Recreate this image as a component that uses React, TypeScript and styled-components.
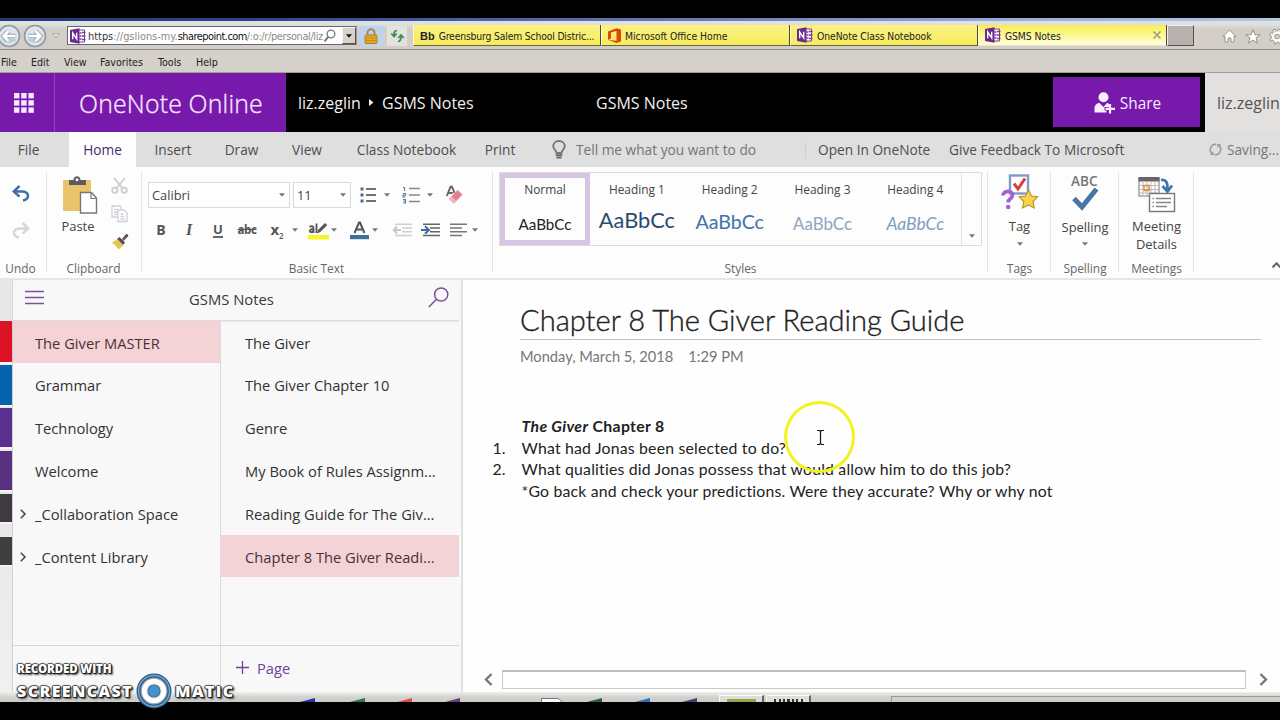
import React from "react";
import styled, { createGlobalStyle, css } from "styled-components";

const ui = `"Open Sans", "Noto Sans", sans-serif`;
const chromeFont = `"DejaVu Sans Condensed", "DejaVu Sans", sans-serif`;
const noteFont = `Lato, "Open Sans", sans-serif`;

const Global = createGlobalStyle`
  * { box-sizing: border-box; }
  html, body { margin: 0; padding: 0; background: #000; overflow: hidden; }
  svg { display: block; flex: none; overflow: visible; }
`;

const Screen = styled.div`
  position: relative;
  width: 1280px;
  height: 720px;
  overflow: hidden;
  display: flex;
  flex-direction: column;
  padding-top: 18px;
  background: #000;
  font-family: ${ui};
  color: #444;
  white-space: nowrap;
`;

/* ---------- browser chrome ---------- */

const TitleEdge = styled.div`
  height: 3px;
  flex: none;
  background: linear-gradient(90deg, #1c3a78, #2b478c 20%, #6a7ab8 55%, #98aede 80%, #a8cbe8);
`;

const AddressRow = styled.div`
  height: 29px;
  flex: none;
  display: flex;
  align-items: center;
  padding-top: 1px;
  background: linear-gradient(#dfe1df 0 3px, #d3cec8 8px);
  border-bottom: 1px solid #8f8b86;
  font-family: ${chromeFont};
  font-size: 10.3px;
  color: #222;
  & > * { flex: none; }
`;

const NavButtons = styled.div`
  width: 67px;
  display: flex;
  align-items: center;
`;

const NavArrows = styled.div`
  display: flex;
  gap: 1px;
  margin: 0 4px 0 -3px;
`;

const AddressBox = styled.div`
  width: 290px;
  height: 19px;
  display: flex;
  align-items: center;
  background: #fff;
  border: 1px solid #6b6570;
  border-right-color: #999;
  padding-left: 2px;
`;

const Url = styled.div`
  width: 240px;
  margin-left: 2px;
  padding-top: 1px;
  color: #8a8a8a;
  font-size: 10.9px;
`;
const UrlScheme = styled.span`
  color: #333;
`;
const UrlHost = styled.span`
  color: #111;
  letter-spacing: -0.5px;
`;
const UrlPath = styled.span`
  letter-spacing: -0.35px;
`;

const DropButton = styled.div`
  width: 14px;
  height: 17px;
  margin-left: 5px;
  display: flex;
  align-items: center;
  justify-content: center;
  background: #d6d2cc;
  border: 1px solid #55504c;
  border-top-color: #f4f4f4;
  border-left-color: #f4f4f4;
`;

const ToolSquare = styled.div<{ $bg: string; $w: number; $ml: number; $mr?: number }>`
  width: ${(p) => p.$w}px;
  height: 20px;
  margin-left: ${(p) => p.$ml}px;
  margin-right: ${(p) => p.$mr ?? 0}px;
  display: flex;
  align-items: center;
  justify-content: center;
  background: ${(p) => p.$bg};
`;

const BrowserTab = styled.div<{ $w: number; $active?: boolean }>`
  width: ${(p) => p.$w}px;
  height: 21px;
  display: flex;
  align-items: center;
  gap: 4px;
  padding-left: 6px;
  background: ${(p) => (p.$active ? "linear-gradient(#f7ee52, #fdf9a0 60%, #fffde0)" : "linear-gradient(#fbf184, #f6ec5c)")};
  border-right: 1.5px solid #4b4640;
  border-bottom: 1px solid ${(p) => (p.$active ? "#e8e4c0" : "#6b6438")};
  border-left: 1px solid #fffbd0;
`;

const TabLabel = styled.span<{ $spacing?: number }>`
  letter-spacing: ${(p) => p.$spacing ?? 0}px;
  padding-top: 1.5px;
  flex: 1;
`;

const Blackboard = styled.b`
  font-family: "Liberation Sans", sans-serif;
  font-size: 11px;
  padding-top: 1px;
`;

const CloseMark = styled.div`
  margin-right: 5px;
`;

const NewTab = styled.div`
  width: 27px;
  height: 21px;
  background: #b6b1af;
  border: 1px solid #55504c;
  border-top-color: #eee;
  border-left-color: #eee;
`;

const BrowserTools = styled.div`
  display: flex;
  gap: 8px;
  margin-left: 28px;
  padding-top: 2px;
`;

const MenuRow = styled.div`
  height: 23px;
  flex: none;
  display: flex;
  align-items: center;
  padding: 1px 0 0 1px;
  background: #d5d0c9;
  border-bottom: 1.5px solid #a39f9a;
  font-family: ${chromeFont};
  font-size: 10.6px;
  color: #222;
`;

const MenuItem = styled.span<{ $w: number }>`
  width: ${(p) => p.$w}px;
`;

/* ---------- OneNote header ---------- */

const Header = styled.div`
  height: 59px;
  flex: none;
  display: flex;
  align-items: stretch;
  background: #e3e0e0;
`;

const Waffle = styled.div`
  width: 55px;
  display: flex;
  align-items: center;
  padding-left: 14px;
  background: #7719aa;
  border-right: 1px solid #9345bd;
`;

const Brand = styled.div`
  width: 231px;
  padding-left: 24px;
  display: flex;
  align-items: center;
  background: #7719aa;
  color: #f8e6ff;
  font-size: 24.8px;
  font-weight: 300;
  letter-spacing: 0.2px;
  -webkit-text-stroke: 0.35px #f8e6ff;
`;

const HeaderBlack = styled.div`
  width: 919px;
  display: flex;
  align-items: center;
  background: #000;
  color: #f0f0f0;
  font-size: 16px;
  padding: 2px 5px 2px 12px;
`;

const CrumbUser = styled.span`
  width: 71px;
`;
const CrumbNotebook = styled.span`
  width: 200px;
  margin: 0 14px 0 8px;
`;

const ShareButton = styled.div`
  width: 147px;
  height: 50px;
  margin: -1px 0 0 auto;
  display: flex;
  align-items: center;
  justify-content: center;
  gap: 5px;
  padding: 2px 0 0 2px;
  background: #7719aa;
  color: #f8eaff;
  font-size: 15.4px;
`;

const HeaderUser = styled.div`
  flex: 1;
  display: flex;
  align-items: center;
  padding: 0 0 0 12px;
  font-size: 16px;
  color: #555;
`;

/* ---------- ribbon tabs ---------- */

const RibbonTabs = styled.div`
  height: 35px;
  flex: none;
  display: flex;
  align-items: stretch;
  background: #dfdfdf;
  font-size: 13.7px;
  color: #4e4e4e;
`;

const RibbonTab = styled.div<{ $w: number; $ml?: number; $active?: boolean }>`
  width: ${(p) => p.$w}px;
  margin-left: ${(p) => p.$ml ?? 0}px;
  display: flex;
  align-items: center;
  justify-content: center;
  ${(p) =>
    p.$active &&
    css`
      background: #fdfdfd;
      color: #4b2a6b;
    `}
`;

const RibbonText = styled.div<{ $w: number; $tone?: string }>`
  width: ${(p) => p.$w}px;
  display: flex;
  align-items: center;
  color: ${(p) => p.$tone ?? "#4e4e4e"};
`;

const BulbSlot = styled.div`
  width: 24px;
  margin-left: 24px;
  display: flex;
  align-items: center;
`;

const ThinRule = styled.div`
  width: 1px;
  height: 16px;
  align-self: center;
  margin-right: 12px;
  background: #cdcdcd;
`;

/* ---------- ribbon ---------- */

const Ribbon = styled.div`
  height: 113px;
  flex: none;
  display: flex;
  background: #fdfdfd;
  border-bottom: 2px solid #e6e6e6;
`;

const Group = styled.div<{ $w: number }>`
  position: relative;
  width: ${(p) => p.$w}px;
  display: flex;
  flex-direction: column;
  flex: none;
  &::after {
    content: "";
    position: absolute;
    right: 0;
    top: 5px;
    height: 100px;
    border-right: 1px solid #e4e4e4;
  }
`;

const GroupBody = styled.div`
  height: 90px;
  display: flex;
`;

const GroupLabel = styled.div<{ $pull?: number }>`
  height: 22px;
  line-height: 24px;
  text-align: center;
  font-size: 11.9px;
  color: #666;
  padding-right: ${(p) => p.$pull ?? 0}px;
`;

const Stack = styled.div<{ $w: number; $pt: number; $gap: number; $ml?: number }>`
  width: ${(p) => p.$w}px;
  margin-left: ${(p) => p.$ml ?? 0}px;
  padding-top: ${(p) => p.$pt}px;
  display: flex;
  flex-direction: column;
  align-items: center;
  gap: ${(p) => p.$gap}px;
`;

const BigLabel = styled.div<{ $pull?: number }>`
  font-size: 12.9px;
  line-height: 18px;
  color: #444;
  text-align: center;
  padding-right: ${(p) => p.$pull ?? 0}px;
`;

const TextTools = styled.div`
  padding: 15px 0 0 5px;
  display: flex;
  flex-direction: column;
  gap: 9px;
`;

const ToolRow = styled.div`
  height: 26px;
  display: flex;
  align-items: center;
  padding-left: 1px;
`;

const FieldBox = styled.div<{ $w: number; $ml?: number }>`
  width: ${(p) => p.$w}px;
  height: 26px;
  margin-left: ${(p) => p.$ml ?? 0}px;
  display: flex;
  align-items: center;
  justify-content: space-between;
  padding: 0 4px 0 3px;
  border: 1px solid #dadada;
  background: #fff;
  font-size: 12.8px;
`;

const Cell = styled.div<{ $w: number; $ml?: number }>`
  width: ${(p) => p.$w}px;
  margin-left: ${(p) => p.$ml ?? 0}px;
  display: flex;
  align-items: center;
  justify-content: center;
  font-size: 14px;
  line-height: 18px;
  font-weight: 700;
  color: #555;
`;

const Italic = styled.i`
  font-family: "Liberation Serif", serif;
  font-size: 16px;
`;
const Under = styled.span`
  border-bottom: 2px solid #666;
  line-height: 13px;
  font-size: 13px;
`;
const Struck = styled.span`
  text-decoration: line-through;
  font-size: 11.5px;
  letter-spacing: -0.4px;
`;
const Subscript = styled.span`
  font-size: 15px;
  sub {
    font-size: 8px;
    line-height: 8px;
    font-weight: 600;
  }
`;

const Gallery = styled.div`
  margin: 5px 0 0 6px;
  width: 483px;
  height: 74px;
  display: flex;
  border: 1px solid #dcdbe0;
`;

const StyleCell = styled.div<{ $active?: boolean }>`
  width: ${(p) => (p.$active ? 90 : 92.8)}px;
  flex: none;
  display: flex;
  flex-direction: column;
  align-items: center;
  justify-content: space-between;
  border: 5px solid ${(p) => (p.$active ? "#d6c6e4" : "transparent")};
  padding-top: 2px;
  padding-left: ${(p) => (p.$active ? 0 : 1)}px;
  font-size: 11.9px;
  line-height: 19px;
`;

const Sample = styled.span<{ $size: number; $tone: string; $italic?: boolean; $lift: number }>`
  font-family: ${noteFont};
  font-size: ${(p) => p.$size}px;
  color: ${(p) => p.$tone};
  font-style: ${(p) => (p.$italic ? "italic" : "normal")};
  line-height: 30px;
  margin-bottom: ${(p) => p.$lift}px;
`;

const GalleryMore = styled.div`
  flex: 1;
  border-left: 1px solid #e1e1e1;
  display: flex;
  align-items: flex-end;
  justify-content: center;
  padding-bottom: 7px;
`;

const Collapse = styled.div`
  margin: auto -1px 10px auto;
  width: 9px;
`;

/* ---------- work area ---------- */

const Work = styled.div`
  height: 412px;
  flex: none;
  display: flex;
  background: #fdfdfd;
`;

const Backdrop = styled.div`
  width: 12px;
  display: flex;
  flex-direction: column;
  background: linear-gradient(#e8e8ea, #e6e6e6 200px, #f0f0ee);
  padding-top: 41px;
`;

const Swatch = styled.div<{ $h: number; $tone: string; $mb: number }>`
  height: ${(p) => p.$h}px;
  margin-bottom: ${(p) => p.$mb}px;
  background: ${(p) => p.$tone};
  box-shadow: 0 2px 0 #f6f4fa;
`;

const Sidebar = styled.div`
  width: 451px;
  display: flex;
  flex-direction: column;
  background: #f8f8f8;
  border-left: 1px solid #cfcfcf;
  border-right: 2px solid #dfe0e2;
`;

const SidebarHead = styled.div`
  height: 41px;
  width: 446px;
  display: flex;
  align-items: center;
  padding: 0 10px 5px 12px;
  border-bottom: 1px solid #dadada;
  box-shadow: 0 1px 2px #e8e8e8;
`;

const NotebookName = styled.div`
  flex: 1;
  text-align: center;
  font-size: 14.8px;
  color: #3a3a3a;
  padding: 2px 9px 0 0;
`;

const Columns = styled.div`
  flex: 1;
  display: flex;
`;

const Column = styled.div<{ $w: number; $rule?: boolean }>`
  width: ${(p) => p.$w}px;
  display: flex;
  flex-direction: column;
  border-right: ${(p) => (p.$rule ? "1px solid #dcdcdc" : "none")};
`;

const Entry = styled.div<{ $active?: boolean }>`
  height: 42.8px;
  display: flex;
  align-items: center;
  padding-top: 0.4px;
  font-size: 14.7px;
  color: ${(p) => (p.$active ? "#4d2f35" : "#333")};
  ${(p) => p.$active && css`background: linear-gradient(#f4d3d6, #f4d3d6) 0 0 / 100% 42px no-repeat;`}
`;

const EntryLead = styled.div<{ $w: number }>`
  width: ${(p) => p.$w}px;
  flex: none;
  display: flex;
  justify-content: center;
  padding-right: 2px;
`;

const ColumnFoot = styled.div`
  margin-top: auto;
  height: 47px;
  border-top: 1px solid #d5d5d5;
  display: flex;
  align-items: center;
  gap: 8px;
  padding: 0 0 3px 15px;
  font-size: 14.7px;
  color: #7140a3;
`;

/* ---------- note page ---------- */

const Page = styled.div`
  flex: 1;
  display: flex;
  flex-direction: column;
  background: #fefefe;
`;

const PageTitle = styled.div`
  width: 741px;
  margin: 20px 0 0 57px;
  height: 40px;
  line-height: 39px;
  border-bottom: 1px solid #c0c0c0;
  font-family: ${noteFont};
  font-weight: 300;
  font-size: 29.1px;
  color: #222;
  -webkit-text-stroke: 0.35px #222;
`;

const PageDate = styled.div`
  display: flex;
  gap: 15px;
  margin: 7px 0 0 57px;
  line-height: 19px;
  font-family: ${noteFont};
  font-size: 14.65px;
  color: #767676;
`;

const NoteBody = styled.div`
  margin: 49px 0 0 29.5px;
  font-family: ${noteFont};
  font-size: 15.8px;
  letter-spacing: 0.2px;
  font-variant-ligatures: none;
  line-height: 21.6px;
  color: #222;
`;

const NoteLine = styled.div<{ $bold?: boolean }>`
  display: flex;
  font-weight: ${(p) => (p.$bold ? 700 : 400)};
  letter-spacing: ${(p) => (p.$bold ? 0.34 : 0.2)}px;
  white-space: pre;
`;

const NoteNumber = styled.span`
  width: 29px;
`;

const ScrollRow = styled.div`
  margin-top: auto;
  padding: 0 12px 3px 21px;
  height: 22px;
  display: flex;
  align-items: center;
`;

const ScrollThumb = styled.div`
  width: 744px;
  height: 19px;
  margin: 0 auto 0 9px;
  border: 1px solid #c9c9c9;
  border-top: 2px solid #bdbdbd;
  background: #fff;
`;

/* ---------- taskbar ---------- */

const Taskbar = styled.div`
  height: 10px;
  flex: none;
  display: flex;
  align-items: flex-end;
  overflow: hidden;
  background: linear-gradient(#f0f0ea, #d2d3cf 5px, #cbccc9);
`;

const Corner = styled.div<{ $ml: number; $tone: string }>`
  width: 15px;
  height: 4px;
  margin-left: ${(p) => p.$ml}px;
  flex: none;
  background: ${(p) => p.$tone};
  clip-path: polygon(100% 0, 100% 100%, 0 100%);
`;

const PaperTop = styled.div`
  margin-left: 81px;
`;

const TaskButton = styled.div<{ $w: number; $ml: number }>`
  width: ${(p) => p.$w}px;
  height: 7px;
  margin-left: ${(p) => p.$ml}px;
  padding: 3px 6px 0 7px;
  background: #deded8;
  border-top: 1px solid #fafafa;
  border-left: 1px solid #fafafa;
  border-right: 2px solid #666;
`;

const TaskFill = styled.div<{ $kind: "olive" | "dots" }>`
  height: 4px;
  background: ${(p) => (p.$kind === "olive" ? "#98a44c" : "repeating-linear-gradient(90deg, #333 0 2px, #deded8 2px 4.5px)")};
`;

const Tray = styled.div`
  margin-left: auto;
  width: 389px;
  height: 6px;
  border-top: 1px solid #999;
  border-left: 1px solid #999;
`;

/* ---------- overlays ---------- */

const Watermark = styled.div`
  position: absolute;
  left: 17px;
  top: 661px;
  color: #fff;
  font-family: "Open Sans", sans-serif;
  font-weight: 800;
  text-shadow: 1px 0 1px #222, -1px 0 1px #333, 0 1px 1px #222, 0 -1px 1px #555, 1px 1px 1px #111, 2px 2px 2px #555;
`;

const WatermarkTop = styled.div`
  font-size: 11.5px;
  line-height: 16px;
  letter-spacing: -0.15px;
`;

const WatermarkRow = styled.div`
  display: flex;
  align-items: center;
  height: 34px;
  margin-top: -3px;
  font-size: 16px;
  letter-spacing: 1.4px;
`;

const DialSlot = styled.div`
  margin: 0 3px 0 3px;
`;

const PointerHalo = styled.div`
  position: absolute;
  left: 784px;
  top: 401px;
  width: 71px;
  height: 72px;
  padding-left: 1px;
  border: 3.5px solid #f3f31f;
  border-radius: 50%;
  display: flex;
  align-items: center;
  justify-content: center;
`;

/* ---------- drawings ---------- */

const Caret = ({ tone = "#777" }: { tone?: string }) => (
  <svg width="6" height="4" viewBox="0 0 6 4"><path d="M0 .3h6L3 3.8z" fill={tone} /></svg>
);

const Round = ({ flip }: { flip?: boolean }) => (
  <svg width="25" height="24" viewBox="0 0 25 24">
    <circle cx="12" cy="12" r="10.5" fill="#dfe5ea" stroke="#8d98a3" strokeWidth="1.6" />
    <path d="M4 15a9 7 0 0 0 16 0z" fill="#b9cfd4" />
    <path d={flip ? "M5.500 12h12M12.500 7l5 5-5 5" : "M18.500 12h-12M11.500 7l-5 5 5 5"} fill="none" stroke="#98a2ac" strokeWidth="4.4" />
    <path d={flip ? "M5.500 12h12M12.500 7l5 5-5 5" : "M18.500 12h-12M11.500 7l-5 5 5 5"} fill="none" stroke="#fff" strokeWidth="2.6" />
  </svg>
);

const HistoryCaret = () => (
  <svg width="8" height="6" viewBox="0 0 8 6"><path d="M.5.500h7L4 5z" fill="#e4e4e4" stroke="#aaa" /></svg>
);

const OneNoteMark = () => (
  <svg width="16" height="16" viewBox="0 0 16 16">
    <path d="M8 2h6.500v12H8z" fill="#fff" stroke="#7b3a9c" />
    <path d="M12 4.500h3.500M12 8h3.500M12 11.500h3.500M9.500 5h2M9.500 8h2M9.500 11h2" stroke="#7b3a9c" strokeWidth="1.300" />
    <path d="M0 2l9.500-1.800v15.600L0 14z" fill="#6b2a8f" />
    <path d="M2.700 11.200V5l4 6V4.800" fill="none" stroke="#fff" strokeWidth="1.400" />
  </svg>
);

const OfficeMark = () => (
  <svg width="13" height="15" viewBox="0 0 13 15">
    <path d="M0 3.500L8.500.2 13 1.500v12L8.500 15 0 11.800l8.500 1V3L3 4.500v6L0 11.800z" fill="#d9480f" />
  </svg>
);

const Lens = () => (
  <svg width="14" height="14" viewBox="0 0 14 14">
    <circle cx="8" cy="5" r="3.800" fill="none" stroke="#777" strokeWidth="1.300" />
    <path d="M5.200 7.800L1.500 12.300" stroke="#777" strokeWidth="2" />
  </svg>
);

const Padlock = () => (
  <svg width="14" height="16" viewBox="0 0 14 16">
    <path d="M3.500 8V4.500a3.500 3.300 0 0 1 7 0V8" fill="none" stroke="#a58a4a" strokeWidth="2" />
    <rect x="1" y="7" width="12" height="8.500" rx="1" fill="#e2a528" stroke="#b87f18" />
    <path d="M1.500 10h11M1.500 12.500h11" stroke="#c98d1b" />
  </svg>
);

const Refresh = () => (
  <svg width="15" height="14" viewBox="0 0 15 14">
    <path d="M7 1.500C4.500 1.500 4 3 4 6M1.200 4.500L4 7.500l2.800-3" fill="none" stroke="#3c8a4e" strokeWidth="1.700" />
    <path d="M8 12.500c2.500 0 3-1.500 3-5M8.200 9L11 6l2.800 3" fill="none" stroke="#3c8a4e" strokeWidth="1.700" />
  </svg>
);

const CloseGlyph = () => (
  <svg width="8" height="8" viewBox="0 0 8 8"><path d="M.5.500l7 7M7.500.500l-7 7" stroke="#a9a070" strokeWidth="1.700" /></svg>
);

const HomeGlyph = () => (
  <svg width="15" height="14" viewBox="0 0 15 14">
    <path d="M1 7.500L7.500 1 14 7.500h-2V13H9V9H6v4H3V7.500z" fill="#fff" stroke="#95918c" />
  </svg>
);
const StarGlyph = () => (
  <svg width="16" height="15" viewBox="0 0 16 15">
    <path d="M8 .8l2 5h5.200l-4.200 3.200 1.600 5.200L8 11.200l-4.600 3L5 9 .8 5.800H6z" fill="#fff" stroke="#95918c" />
  </svg>
);
const GearGlyph = () => (
  <svg width="16" height="15" viewBox="0 0 16 15">
    <circle cx="8" cy="7.500" r="6" fill="none" stroke="#95918c" strokeWidth="3.600" strokeDasharray="2.700 2.010" />
    <circle cx="8" cy="7.500" r="4" fill="none" stroke="#95918c" strokeWidth="4" />
    <circle cx="8" cy="7.500" r="6" fill="none" stroke="#fff" strokeWidth="1.800" strokeDasharray="1.700 3.010" strokeDashoffset="-.5" />
    <circle cx="8" cy="7.500" r="4" fill="none" stroke="#fff" strokeWidth="2.400" />
  </svg>
);

const WaffleGlyph = () => (
  <svg width="20" height="20" viewBox="0 0 20 20" fill="#fbe9ff">
    {[0, 7.2, 14.4].map((y) => [0, 7.2, 14.4].map((x) => <rect key={`${x}-${y}`} x={x} y={y} width="5.400" height="5.400" />))}
  </svg>
);

const CrumbArrow = () => (
  <svg width="5" height="7" viewBox="0 0 5 7"><path d="M0 0l4.500 3.500L0 7z" fill="#eee" /></svg>
);

const ShareGlyph = () => (
  <svg width="21" height="22" viewBox="0 0 21 22">
    <circle cx="9.500" cy="5.200" r="5" fill="#fbefff" />
    <path d="M.5 20.500v-4c0-3 2-5.500 5-5.500l4 4 3.500-4c1 0 1.500.5 2 1v3h-4.500v3.500h2v2z" fill="#fbefff" />
    <path d="M16 12v9.500M11.500 16.800h9.500" stroke="#fbefff" strokeWidth="2.200" />
  </svg>
);

const Bulb = () => (
  <svg width="14" height="19" viewBox="0 0 14 19">
    <path d="M4.500 13c0-3-3.300-3.500-3.300-7A5.700 5.300 0 0 1 7 1a5.700 5.300 0 0 1 5.800 5c0 3.500-3.300 4-3.300 7z" fill="none" stroke="#777" strokeWidth="1.900" />
    <path d="M3.800 15.200h6.400M4.500 17.600h5" stroke="#666" strokeWidth="1.900" />
  </svg>
);

const Spinner = () => (
  <svg width="13" height="13" viewBox="0 0 13 13" fill="none" stroke="#999" strokeWidth="1.500">
    <path d="M3.800 11A5.300 5.300 0 0 1 7.500 1.300M9.200 2A5.300 5.300 0 0 1 5.500 11.700" />
    <path d="M9 4.200V1.700h2.500M4 8.800v2.500H1.500" strokeWidth="1.200" />
  </svg>
);

const Undo = ({ tone, flip }: { tone: string; flip?: boolean }) => (
  <svg width="18" height="17" viewBox="0 0 18 17">
    <g transform={flip ? "translate(18 0) scale(-1 1)" : undefined} fill="none" stroke={tone} strokeWidth="2.500">
      <path d="M2 6.500h8.500c4 0 6 2.500 5.500 5-.4 2-2 3.500-5 4" />
      <path d="M7.500.8L1.800 6.500l5.700 5.200" />
    </g>
  </svg>
);

const PasteGlyph = () => (
  <svg width="36" height="38" viewBox="0 0 36 38">
    <rect x="1" y="4" width="28" height="31" rx="1" fill="#ebc36c" />
    <path d="M7 4h4.500c0-5 7-5 7 0H24v5H7z" fill="#5c5c60" />
    <circle cx="15" cy="3.800" r="1.500" fill="#fff" />
    <path d="M18.500 16.500h11l5 5.500v15h-16z" fill="#fff" stroke="#777" strokeWidth="1.400" />
    <path d="M29 17v5.500h5.500" fill="none" stroke="#777" strokeWidth="1.200" />
  </svg>
);

const Scissors = () => (
  <svg width="17" height="17" viewBox="0 0 17 17" fill="none" stroke="#cbcdd1" strokeWidth="1.800">
    <path d="M3 1l8.500 10M14 1L5.500 11" />
    <circle cx="3.800" cy="13.200" r="2.600" />
    <circle cx="13.200" cy="13.200" r="2.600" />
  </svg>
);
const CopyGlyph = () => (
  <svg width="17" height="17" viewBox="0 0 17 17" fill="#fff" stroke="#cfd1d6" strokeWidth="1.300">
    <path d="M1 1h8l1 1.500V12H1zM3 4.500h4M3 7h4M3 9.500h3" />
    <path d="M7 5h6l3 3v8.500H7zM9.500 9h3M9.500 11.500h4M9.500 14h4" />
  </svg>
);
const Brush = () => (
  <svg width="18" height="17" viewBox="0 0 18 17">
    <path d="M1 9.500l5-3 6 6-4.500 4C6 13.500 3.500 12 1 9.500z" fill="#e6c64a" />
    <path d="M6 6l2.500-2 5.500 5.500-2 2.500z" fill="#57504f" />
    <path d="M11 6l3.500-4.500c1.500-1.500 3.500 0 2.500 2L12.500 8z" fill="#6b5550" />
  </svg>
);

const Bullets = () => (
  <svg width="16" height="16" viewBox="0 0 16 16">
    <path d="M6 2h10M6 8h10M6 14h10" stroke="#444" strokeWidth="1.700" />
    {[2, 8, 14].map((y) => <rect key={y} x=".5" y={y - 1.5} width="3" height="3" fill="#4d6a8e" />)}
  </svg>
);
const Numbers = () => (
  <svg width="18" height="18" viewBox="0 0 18 18">
    <path d="M7 2.500h11M7 9h11M7 15.500h11" stroke="#888" strokeWidth="1.400" />
    <path d="M1 1.500h1.500V5M1 7.500h2.500v1.700H1v1.800h2.500M1 13.500h2.500V17H1M1.500 15.200h2" fill="none" stroke="#6b7fa6" strokeWidth="1.200" />
  </svg>
);
const Eraser = () => (
  <svg width="17" height="18" viewBox="0 0 17 18">
    <path d="M.8 10L4.500.800h1.500l2.500 6M2.300 7h4.500" fill="none" stroke="#666" strokeWidth="1.900" />
    <path d="M3 13L11.500 4l5 4.500L8 17.500z" fill="#e57f92" />
    <path d="M3 13l2.500-2.700L10.500 14.900 8 17.500z" fill="#f3b4bd" />
  </svg>
);
const Highlighter = () => (
  <svg width="21" height="19" viewBox="0 0 21 19">
    <path d="M1.500 6c2-1.500 4-1 4 1v5M5.500 8c-4-.3-4.500 3-2.500 3.200 1 0 2-.6 2.500-1.500M8.500 2.500V12" fill="none" stroke="#555" strokeWidth="1.800" />
    <path d="M9 12.500l1-3.500 7-7 2.300 2-7 7z" fill="#555" />
    <rect y="14" width="21" height="4.500" fill="#f5f52a" />
  </svg>
);
const FontColor = () => (
  <svg width="19" height="19" viewBox="0 0 19 19">
    <path d="M4.500 12L9 1.500h1L14.500 12M6.200 8.500h6.600" fill="none" stroke="#555" strokeWidth="2" />
    <rect y="14" width="19" height="4.200" fill="#3f6d9c" />
  </svg>
);
const Indent = ({ dim }: { dim?: boolean }) => (
  <svg width="19" height="14" viewBox="0 0 19 14">
    <path d="M2 1.200h17M9 5h10M9 8.700h10M2 12.500h17" stroke={dim ? "#cfcfcf" : "#666"} strokeWidth="1.400" />
    <path d={dim ? "M8 7H1M4 3.500L.8 7 4 10.500" : "M0 7h7M4 3.200L8 7l-4 3.800"} fill="none" stroke={dim ? "#c6c6c6" : "#3a6ea5"} strokeWidth="2" />
  </svg>
);
const AlignLeft = () => (
  <svg width="17" height="14" viewBox="0 0 17 14">
    <path d="M0 1.200h17M0 5h12M0 8.700h17M0 12.500h12" stroke="#777" strokeWidth="1.400" />
  </svg>
);

const TagGlyph = () => (
  <svg width="37" height="36" viewBox="0 0 37 36">
    <rect x="9" y="1.500" width="18" height="18" fill="#fff" stroke="#7f9cc8" strokeWidth="2.400" />
    <path d="M13 9.500l4 5.500 7-10.500" fill="none" stroke="#d8412f" strokeWidth="3" />
    <path d="M2 21.500c.3-5.500 9.500-5.500 9.500-.5 0 3.800-4.300 3-4.300 7.500" fill="none" stroke="#a65fd6" strokeWidth="3.800" />
    <circle cx="7.200" cy="33" r="2.300" fill="#a65fd6" />
    <path d="M27.500 16l3 6 6 .8-4.500 4.700 1.200 6.500-5.700-3-6 3 1.300-6.500-4.600-4.700 6.300-.8z" fill="#f6d54f" stroke="#bd9430" strokeWidth="1.200" />
  </svg>
);

const Abc = styled.div`
  font-size: 13.6px;
  line-height: 13px;
  color: #777;
  font-weight: 600;
`;
const Check = () => (
  <svg width="28" height="24" viewBox="0 0 28 24"><path d="M3 11.500l8 8.500L25.500 2" fill="none" stroke="#4675a8" strokeWidth="5" /></svg>
);

const MeetingGlyph = () => (
  <svg width="37" height="36" viewBox="0 0 37 36">
    <rect x="1" y="2" width="20" height="18" fill="#fff" stroke="#777" />
    <rect x=".5" y="1" width="21" height="4.500" fill="#666" />
    <path d="M5 6v13M9 6v13M13 6v13M17 6v13M2 9.500h18M2 13.500h18M2 17h18" stroke="#bbb" />
    <rect x="6" y="9.500" width="5" height="5" fill="none" stroke="#e09138" strokeWidth="1.500" />
    <rect x="11.500" y="17.500" width="25" height="18" fill="#fff" stroke="#777" strokeWidth="1.400" />
    <path d="M18 22.500h15M18 26.500h15M18 30.500h11M14.500 22.500h1.500M14.500 26.500h1.500M14.500 30.500h1.500" stroke="#888" strokeWidth="1.300" />
    <path d="M23 4c5-1 7 3 6.500 9M24.500 10l5 5.500 4.500-6" fill="none" stroke="#3d76ad" strokeWidth="2.800" />
  </svg>
);

const Burger = () => (
  <svg width="19" height="15" viewBox="0 0 19 15"><path d="M0 1.500h19M0 7.500h19M0 13.500h19" stroke="#7a5299" strokeWidth="1.400" /></svg>
);
const SearchGlyph = () => (
  <svg width="21" height="21" viewBox="0 0 21 21" fill="none" stroke="#7a4f9c" strokeWidth="1.500">
    <circle cx="13.200" cy="7.500" r="6.600" /><path d="M8.500 12.300L.8 20" />
  </svg>
);
const Chevron = ({ w, h, d, tone, weight }: { w: number; h: number; d: string; tone: string; weight: number }) => (
  <svg width={w} height={h} viewBox={`0 0 ${w} ${h}`}><path d={d} fill="none" stroke={tone} strokeWidth={weight} /></svg>
);
const Plus = () => (
  <svg width="13" height="13" viewBox="0 0 13 13"><path d="M6.500 0v13M0 6.500h13" stroke="#7140a3" strokeWidth="1.300" /></svg>
);

const RecorderDial = () => (
  <svg width="36" height="36" viewBox="0 0 36 36">
    <circle cx="18" cy="18" r="15.500" fill="#8fa3b3" stroke="#2f5a80" strokeWidth="4" />
    <circle cx="18" cy="18" r="15.500" fill="none" stroke="#6fa6cf" strokeWidth="1.500" />
    <circle cx="18" cy="18" r="10" fill="#dfe6ea" stroke="#fff" strokeWidth="4.500" />
    <circle cx="18" cy="18" r="6" fill="#3f94d1" stroke="#50708a" strokeWidth="1.200" />
  </svg>
);

const PaperEdge = () => (
  <svg width="22" height="4" viewBox="0 0 22 4"><path d="M.5 5V.500h17L22 5" fill="#fafafa" stroke="#777" /></svg>
);

const IBeam = () => (
  <svg width="7" height="15" viewBox="0 0 7 15"><path d="M0 .5h2.500l1 1 1-1H7M3.500 1v13M0 14.500h2.500l1-1 1 1H7" fill="none" stroke="#111" strokeWidth="1.200" /></svg>
);

/* ---------- data ---------- */

const sections = [
  { name: "The Giver MASTER", active: true },
  { name: "Grammar" },
  { name: "Technology" },
  { name: "Welcome" },
  { name: "_Collaboration Space", group: true },
  { name: "_Content Library", group: true },
];
const pages = [
  { name: "The Giver" },
  { name: "The Giver Chapter 10" },
  { name: "Genre" },
  { name: "My Book of Rules Assignm..." },
  { name: "Reading Guide for The Giv..." },
  { name: "Chapter 8 The Giver Readi...", active: true },
];
const styleSamples = [
  { name: "Normal", size: 15.2, tone: "#222", lift: 1.5, active: true },
  { name: "Heading 1", size: 21.8, tone: "#2b4a70", lift: 5 },
  { name: "Heading 2", size: 19.6, tone: "#4172a8", lift: 3.5 },
  { name: "Heading 3", size: 16.9, tone: "#8aa5c0", lift: 1 },
  { name: "Heading 4", size: 17.5, tone: "#7d9dc0", lift: 1, italic: true },
];

export default function App() {
  return (
    <Screen>
      <Global />
      <TitleEdge />
      <AddressRow>
        <NavButtons>
          <NavArrows><Round /><Round flip /></NavArrows>
          <HistoryCaret />
        </NavButtons>
        <AddressBox>
          <OneNoteMark />
          <Url><UrlScheme>https</UrlScheme>://gslions-my.<UrlHost>sharepoint.com</UrlHost><UrlPath>/:o:/r/personal/liz</UrlPath></Url>
          <Lens />
          <DropButton><Caret tone="#111" /></DropButton>
        </AddressBox>
        <ToolSquare $bg="#bdd4ee" $w={24} $ml={2}><Padlock /></ToolSquare>
        <ToolSquare $bg="#e2e3df" $w={20} $ml={4} $mr={6}><Refresh /></ToolSquare>
        <BrowserTab $w={188}><Blackboard>Bb</Blackboard><TabLabel $spacing={-0.16}>Greensburg Salem School Distric...</TabLabel></BrowserTab>
        <BrowserTab $w={189}><OfficeMark /><TabLabel>Microsoft Office Home</TabLabel></BrowserTab>
        <BrowserTab $w={188}><OneNoteMark /><TabLabel $spacing={-0.05}>OneNote Class Notebook</TabLabel></BrowserTab>
        <BrowserTab $w={189} $active>
          <OneNoteMark /><TabLabel $spacing={-0.1}>GSMS Notes</TabLabel>
          <CloseMark><CloseGlyph /></CloseMark>
        </BrowserTab>
        <NewTab />
        <BrowserTools><HomeGlyph /><StarGlyph /><GearGlyph /></BrowserTools>
      </AddressRow>
      <MenuRow>
        <MenuItem $w={30}>File</MenuItem>
        <MenuItem $w={33}>Edit</MenuItem>
        <MenuItem $w={36}>View</MenuItem>
        <MenuItem $w={58}>Favorites</MenuItem>
        <MenuItem $w={38}>Tools</MenuItem>
        <MenuItem $w={40}>Help</MenuItem>
      </MenuRow>

      <Header>
        <Waffle><WaffleGlyph /></Waffle>
        <Brand>OneNote Online</Brand>
        <HeaderBlack>
          <CrumbUser>liz.zeglin</CrumbUser>
          <CrumbArrow />
          <CrumbNotebook>GSMS Notes</CrumbNotebook>
          <span>GSMS Notes</span>
          <ShareButton><ShareGlyph />Share</ShareButton>
        </HeaderBlack>
        <HeaderUser>liz.zeglin</HeaderUser>
      </Header>

      <RibbonTabs>
        <RibbonTab $w={57}>File</RibbonTab>
        <RibbonTab $w={67} $ml={12} $active>Home</RibbonTab>
        <RibbonTab $w={74}>Insert</RibbonTab>
        <RibbonTab $w={63}>Draw</RibbonTab>
        <RibbonTab $w={68}>View</RibbonTab>
        <RibbonTab $w={131}>Class Notebook</RibbonTab>
        <RibbonTab $w={56}>Print</RibbonTab>
        <BulbSlot><Bulb /></BulbSlot>
        <RibbonText $w={229} $tone="#747474">Tell me what you want to do</RibbonText>
        <ThinRule />
        <RibbonText $w={131}>Open In OneNote</RibbonText>
        <RibbonText $w={260}>Give Feedback To Microsoft</RibbonText>
        <RibbonText $w={18}><Spinner /></RibbonText>
        <RibbonText $w={53} $tone="#777">Saving...</RibbonText>
      </RibbonTabs>

      <Ribbon>
        <Group $w={47}>
          <GroupBody><Stack $w={41} $pt={18} $gap={20}><Undo tone="#3f6ea6" /><Undo tone="#d3d5d8" flip /></Stack></GroupBody>
          <GroupLabel $pull={6}>Undo</GroupLabel>
        </Group>
        <Group $w={95}>
          <GroupBody>
            <Stack $w={50} $pt={9} $gap={3} $ml={8}><PasteGlyph /><BigLabel $pull={4}>Paste</BigLabel></Stack>
            <Stack $w={29} $pt={10} $gap={11}><Scissors /><CopyGlyph /><Brush /></Stack>
          </GroupBody>
          <GroupLabel $pull={2}>Clipboard</GroupLabel>
        </Group>
        <Group $w={351}>
          <GroupBody>
            <TextTools>
              <ToolRow>
                <FieldBox $w={142}>Calibri<Caret /></FieldBox>
                <FieldBox $w={58} $ml={3}>11<Caret /></FieldBox>
                <Cell $w={24} $ml={5}><Bullets /></Cell>
                <Cell $w={6} $ml={4}><Caret /></Cell>
                <Cell $w={24} $ml={9}><Numbers /></Cell>
                <Cell $w={6} $ml={4}><Caret /></Cell>
                <Cell $w={24} $ml={9}><Eraser /></Cell>
              </ToolRow>
              <ToolRow>
                <Cell $w={26}>B</Cell>
                <Cell $w={30}><Italic>I</Italic></Cell>
                <Cell $w={28}><Under>U</Under></Cell>
                <Cell $w={30}><Struck>abc</Struck></Cell>
                <Cell $w={30}><Subscript>x<sub>2</sub></Subscript></Cell>
                <Cell $w={6}><Caret /></Cell>
                <Cell $w={26} $ml={7}><Highlighter /></Cell>
                <Cell $w={6}><Caret /></Cell>
                <Cell $w={25} $ml={10}><FontColor /></Cell>
                <Cell $w={6}><Caret /></Cell>
                <Cell $w={26} $ml={11}><Indent dim /></Cell>
                <Cell $w={30}><Indent /></Cell>
                <Cell $w={26}><AlignLeft /></Cell>
                <Cell $w={6} $ml={1}><Caret /></Cell>
              </ToolRow>
            </TextTools>
          </GroupBody>
          <GroupLabel $pull={2}>Basic Text</GroupLabel>
        </Group>
        <Group $w={495}>
          <GroupBody>
            <Gallery>
              {styleSamples.map((s) => (
                <StyleCell key={s.name} $active={s.active}>
                  {s.name}
                  <Sample $size={s.size} $tone={s.tone} $italic={s.italic} $lift={s.lift}>AaBbCc</Sample>
                </StyleCell>
              ))}
              <GalleryMore><Caret /></GalleryMore>
            </Gallery>
          </GroupBody>
          <GroupLabel>Styles</GroupLabel>
        </Group>
        <Group $w={63}>
          <GroupBody><Stack $w={63} $pt={7} $gap={7}><TagGlyph /><BigLabel>Tag</BigLabel><Caret /></Stack></GroupBody>
          <GroupLabel>Tags</GroupLabel>
        </Group>
        <Group $w={68}>
          <GroupBody><Stack $w={68} $pt={7} $gap={6.5}>
            <div><Abc>ABC</Abc><Check /></div><BigLabel>Spelling</BigLabel><Caret />
          </Stack></GroupBody>
          <GroupLabel>Spelling</GroupLabel>
        </Group>
        <Group $w={75}>
          <GroupBody><Stack $w={75} $pt={9} $gap={5}><MeetingGlyph /><BigLabel>Meeting<br />Details</BigLabel></Stack></GroupBody>
          <GroupLabel>Meetings</GroupLabel>
        </Group>
        <Collapse><Chevron w={9} h={6} d="M.5 5.500L4.500 1.200l4 4.300" tone="#666" weight={2} /></Collapse>
      </Ribbon>

      <Work>
        <Backdrop>
          <Swatch $h={41} $tone="#dc1325" $mb={3} />
          <Swatch $h={40} $tone="#0863ad" $mb={3} />
          <Swatch $h={39} $tone="#59308f" $mb={4} />
          <Swatch $h={39} $tone="#59307f" $mb={4} />
          <Swatch $h={28} $tone="#3f3a40" $mb={15} />
          <Swatch $h={28} $tone="#3f403e" $mb={0} />
        </Backdrop>
        <Sidebar>
          <SidebarHead>
            <Burger />
            <NotebookName>GSMS Notes</NotebookName>
            <SearchGlyph />
          </SidebarHead>
          <Columns>
            <Column $w={208} $rule>
              {sections.map((s) => (
                <Entry key={s.name} $active={s.active}>
                  <EntryLead $w={22}>{s.group && <Chevron w={6} h={10} d="M.8.800L5 5 .8 9.200" tone="#444" weight={1.5} />}</EntryLead>
                  {s.name}
                </Entry>
              ))}
              <ColumnFoot />
            </Column>
            <Column $w={238}>
              {pages.map((p) => (
                <Entry key={p.name} $active={p.active}>
                  <EntryLead $w={24} />
                  {p.name}
                </Entry>
              ))}
              <ColumnFoot><Plus />Page</ColumnFoot>
            </Column>
          </Columns>
        </Sidebar>
        <Page>
          <PageTitle>Chapter 8 The Giver Reading Guide</PageTitle>
          <PageDate><span>Monday, March 5, 2018</span><span>1:29 PM</span></PageDate>
          <NoteBody>
            <NoteLine $bold><NoteNumber /><i>The Giver</i> Chapter 8</NoteLine>
            <NoteLine><NoteNumber>1.</NoteNumber>What had Jonas been selected to do?</NoteLine>
            <NoteLine><NoteNumber>2.</NoteNumber>What qualities did Jonas possess that would allow him to do this job?</NoteLine>
            <NoteLine><NoteNumber />*Go back and check your predictions. Were they accurate? Why or why not</NoteLine>
          </NoteBody>
          <ScrollRow>
            <Chevron w={9} h={13} d="M7.500 1L2 6.500 7.500 12" tone="#777" weight={2.4} />
            <ScrollThumb />
            <Chevron w={9} h={13} d="M1.500 1L7 6.500 1.500 12" tone="#777" weight={2.4} />
          </ScrollRow>
        </Page>
      </Work>

      <Taskbar>
        <Corner $ml={300} $tone="#2b2fa8" />
        <Corner $ml={35} $tone="#2d7358" />
        <Corner $ml={32} $tone="#d6563c" />
        <Corner $ml={33} $tone="#6b3a78" />
        <PaperTop><PaperEdge /></PaperTop>
        <Corner $ml={24} $tone="#245c48" />
        <Corner $ml={33} $tone="#2372c4" />
        <Corner $ml={32} $tone="#4d3a78" />
        <TaskButton $w={45} $ml={22}><TaskFill $kind="olive" /></TaskButton>
        <TaskButton $w={45} $ml={2}><TaskFill $kind="dots" /></TaskButton>
        <Tray />
      </Taskbar>

      <PointerHalo><IBeam /></PointerHalo>
      <Watermark>
        <WatermarkTop>RECORDED WITH</WatermarkTop>
        <WatermarkRow>SCREENCAST<DialSlot><RecorderDial /></DialSlot>MATIC</WatermarkRow>
      </Watermark>
    </Screen>
  );
}
